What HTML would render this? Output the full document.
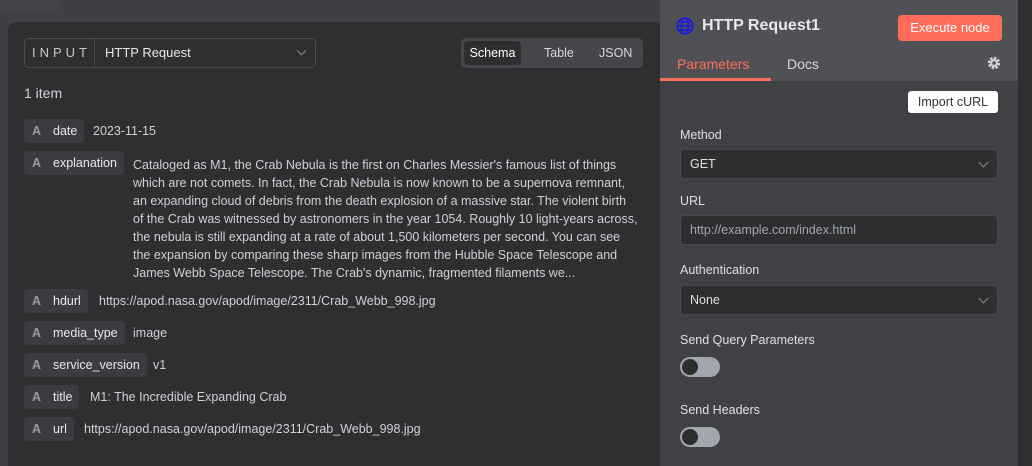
<!DOCTYPE html>
<html><head><meta charset="utf-8"><style>
*{margin:0;padding:0;box-sizing:border-box}
html,body{width:1032px;height:466px;overflow:hidden}
body{background:#3f4046;font-family:"Liberation Sans",sans-serif;position:relative;color:#d0d1d5}
.abs{position:absolute}
#left{left:8px;top:22px;width:660px;height:444px;background:#2e2f31;border-radius:8px 8px 0 0}
.sel{left:24px;top:38px;width:292px;height:30px;border:1px solid #4a4b4f;border-radius:5px}
.pill{position:absolute;height:24px;background:#3b3c40;border-radius:4px;font-size:12.5px;line-height:24px;color:#e8e8ea;padding-left:29px;padding-right:7px}
.pill b{position:absolute;left:8px;color:#9a9ba0;font-weight:bold}
.v{position:absolute;font-size:12.5px;color:#d0d1d5;white-space:nowrap}
#right{left:660px;top:0;width:358px;height:466px;background:#404144}
.lbl{position:absolute;left:680px;font-size:12.5px;color:#e0e0e2}
.inp{position:absolute;left:680px;width:318px;height:30px;background:#2d2e30;border:1px solid #4a4b4f;border-radius:4px;font-size:12.5px;line-height:28px;padding-left:9px;color:#e0e0e2}
.chev{position:absolute;right:10px;top:9px;width:7px;height:7px;border-right:1px solid #888;border-bottom:1px solid #888;transform:rotate(45deg)}
.tog{position:absolute;left:680px;width:40px;height:20px;border-radius:10px;background:#a3a6ae}
.tog:after{content:"";position:absolute;left:2px;top:2px;width:16px;height:16px;border-radius:50%;background:#2d2e30}
</style></head><body>
<div class="abs" style="left:0;top:0;width:60px;height:10px;background:#4a4547;opacity:.5"></div>
<div id="left" class="abs"></div>
<div class="abs sel">
 <div class="abs" style="left:0;top:0;width:70px;height:28px;border-right:1px solid #4a4b4f;font-size:13px;letter-spacing:4px;line-height:28px;padding-left:7px;color:#c8c9cc">INPUT</div>
 <div class="abs" style="left:80px;top:0;font-size:13px;line-height:28px;color:#e8e8ea">HTTP Request</div>
 <div class="chev" style="top:8px"></div>
</div>
<div class="abs" style="left:461px;top:38px;width:182px;height:30px;background:#454649;border-radius:5px"></div>
<div class="abs" style="left:464px;top:41px;width:57px;height:24px;background:#2d2e30;border-radius:4px;color:#fff;font-size:12.5px;line-height:24px;text-align:center">Schema</div>
<div class="abs" style="left:544px;top:46px;font-size:12.5px;color:#d8d8da">Table</div>
<div class="abs" style="left:599px;top:46px;font-size:12.5px;color:#d8d8da">JSON</div>
<div class="abs" style="left:24px;top:85px;font-size:14px;color:#d0d1d5">1 item</div>

<div class="pill" style="left:24px;top:119px"><b>A</b>date</div><div class="v" style="left:93px;top:124px">2023-11-15</div>
<div class="pill" style="left:24px;top:151px"><b>A</b>explanation</div>
<div class="v" style="left:133px;top:156px;line-height:18px">Cataloged as M1, the Crab Nebula is the first on Charles Messier's famous list of things<br>which are not comets. In fact, the Crab Nebula is now known to be a supernova remnant,<br>an expanding cloud of debris from the death explosion of a massive star. The violent birth<br>of the Crab was witnessed by astronomers in the year 1054. Roughly 10 light-years across,<br>the nebula is still expanding at a rate of about 1,500 kilometers per second. You can see<br>the expansion by comparing these sharp images from the Hubble Space Telescope and<br>James Webb Space Telescope. The Crab's dynamic, fragmented filaments we...</div>
<div class="pill" style="left:24px;top:289px"><b>A</b>hdurl</div><div class="v" style="left:99px;top:294px">https://apod.nasa.gov/apod/image/2311/Crab_Webb_998.jpg</div>
<div class="pill" style="left:24px;top:321px"><b>A</b>media_type</div><div class="v" style="left:133px;top:326px">image</div>
<div class="pill" style="left:24px;top:353px"><b>A</b>service_version</div><div class="v" style="left:153px;top:358px">v1</div>
<div class="pill" style="left:24px;top:385px"><b>A</b>title</div><div class="v" style="left:90px;top:390px">M1: The Incredible Expanding Crab</div>
<div class="pill" style="left:24px;top:417px"><b>A</b>url</div><div class="v" style="left:84px;top:422px">https://apod.nasa.gov/apod/image/2311/Crab_Webb_998.jpg</div>

<div id="right" class="abs"></div>
<div class="abs" style="left:660px;top:0;width:358px;height:81px;background:#505154"></div>
<div class="abs" style="left:1018px;top:0;width:14px;height:466px;background:#2e2f31"></div>
<svg class="abs" style="left:676px;top:17px" width="18" height="18" viewBox="0 0 18 18" fill="none" stroke="#1a1adc" stroke-width="1.6"><circle cx="9" cy="9" r="7.8"/><ellipse cx="9" cy="9" rx="3.5" ry="7.8"/><line x1="1" y1="9" x2="17" y2="9"/><line x1="2.5" y1="5" x2="15.5" y2="5"/><line x1="2.5" y1="13" x2="15.5" y2="13"/></svg>
<div class="abs" style="left:702px;top:17px;font-size:16px;font-weight:bold;color:#e8e8ea">HTTP Request1</div>
<div class="abs" style="left:898px;top:15px;width:104px;height:26px;background:#ff6d5a;border-radius:4px;color:#fff;font-size:13px;line-height:26px;text-align:center">Execute node</div>
<div class="abs" style="left:677px;top:56px;font-size:14px;color:#ff6d5a">Parameters</div>
<div class="abs" style="left:660px;top:78px;width:111px;height:3px;background:#ff6d5a"></div>
<div class="abs" style="left:787px;top:56px;font-size:14px;color:#d8d8da">Docs</div>
<svg class="abs" style="left:987px;top:56px" width="14" height="14" viewBox="0 0 14 14"><circle cx="7" cy="7" r="4.5" fill="none" stroke="#d0d1d5" stroke-width="3.5" stroke-dasharray="2.2 1.3"/><circle cx="7" cy="7" r="4" fill="#d0d1d5"/><circle cx="7" cy="7" r="1.8" fill="#505154"/></svg>
<div class="abs" style="left:908px;top:91px;width:90px;height:22px;background:#fff;border-radius:3px;color:#333;font-size:12.5px;line-height:22px;text-align:center">Import cURL</div>
<div class="lbl" style="top:128px">Method</div>
<div class="inp" style="top:149px">GET<div class="chev"></div></div>
<div class="lbl" style="top:194px">URL</div>
<div class="inp" style="top:215px;color:#a3a6ae">http://example.com/index.html</div>
<div class="lbl" style="top:263px">Authentication</div>
<div class="inp" style="top:285px">None<div class="chev"></div></div>
<div class="lbl" style="top:333px">Send Query Parameters</div>
<div class="tog" style="top:357px"></div>
<div class="lbl" style="top:403px">Send Headers</div>
<div class="tog" style="top:427px"></div>
</body></html>
